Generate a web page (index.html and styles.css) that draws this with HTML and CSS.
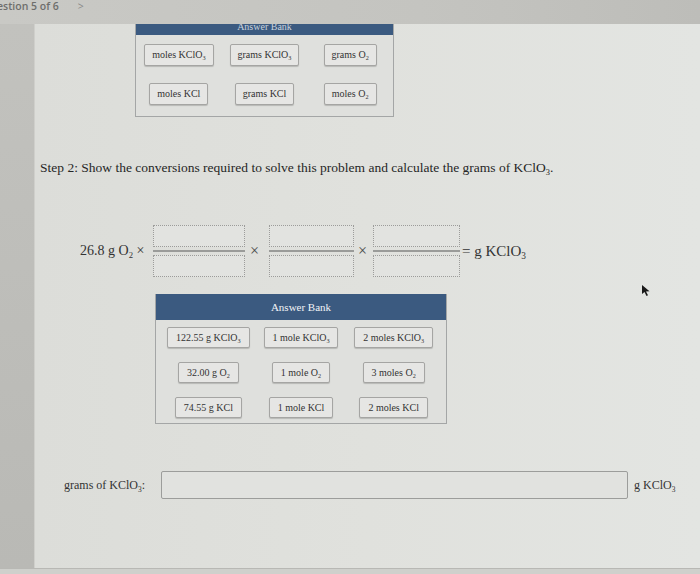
FILE: index.html
```html
<!DOCTYPE html>
<html>
<head>
<meta charset="utf-8">
<link rel="stylesheet" href="styles.css">
</head>
<body>
<div class="topbar"><span class="qnum">estion 5 of 6</span><span class="chev">&gt;</span></div>
<div class="main">
  <div class="leftstrip"></div>
  <div class="panel">
    <div class="bank bank1">
      <div class="bank-head small">Answer Bank</div>
      <div class="bank-body">
        <div class="chip">moles KClO<sub>3</sub></div>
        <div class="chip">grams KClO<sub>3</sub></div>
        <div class="chip">grams O<sub>2</sub></div>
        <div class="chip">moles KCl</div>
        <div class="chip">grams KCl</div>
        <div class="chip">moles O<sub>2</sub></div>
      </div>
    </div>

    <p class="step">Step 2: Show the conversions required to solve this problem and calculate the grams of KClO<sub>3</sub>.</p>

    <div class="equation">
      <span class="given">26.8 g O<sub>2</sub> &times;</span>
      <div class="frac"><div class="slot"></div><div class="bar"></div><div class="slot"></div></div>
      <span class="times">&times;</span>
      <div class="frac f2"><div class="slot"></div><div class="bar"></div><div class="slot"></div></div>
      <span class="times t2">&times;</span>
      <div class="frac f3"><div class="slot"></div><div class="bar"></div><div class="slot"></div></div>
      <span class="result">= g KClO<sub>3</sub></span>
    </div>

    <div class="bank bank2">
      <div class="bank-head">Answer Bank</div>
      <div class="bank-body">
        <div class="chip">122.55 g KClO<sub>3</sub></div>
        <div class="chip">1 mole KClO<sub>3</sub></div>
        <div class="chip">2 moles KClO<sub>3</sub></div>
        <div class="chip">32.00 g O<sub>2</sub></div>
        <div class="chip">1 mole O<sub>2</sub></div>
        <div class="chip">3 moles O<sub>2</sub></div>
        <div class="chip">74.55 g KCl</div>
        <div class="chip">1 mole KCl</div>
        <div class="chip">2 moles KCl</div>
      </div>
    </div>

    <div class="answer-row">
      <span class="label">grams of KClO<sub>3</sub>:</span>
      <div class="input"></div>
      <span class="unit">g KClO<sub>3</sub></span>
    </div>

    <svg class="cursor" width="10" height="13" viewBox="0 0 10 13"><path d="M1 1 L1 10 L3.5 8 L5.5 12 L7 11.3 L5 7.4 L8.5 7.2 Z" fill="#1a1a1a"/></svg>
  </div>
</div>
<div class="bottomstrip"></div>
</body>
</html>
```

FILE: styles.css
```css
html, body {
  margin: 0;
  padding: 0;
}
body {
  width: 700px;
  height: 574px;
  overflow: hidden;
  background: #c7c7c3;
  font-family: "Liberation Serif", "Times New Roman", serif;
  color: #2a2a2a;
}
sub {
  font-size: 0.62em;
  vertical-align: -0.35em;
  line-height: 0;
}
.topbar {
  height: 24px;
  display: flex;
  align-items: flex-start;
  font-family: "Open Sans", "Liberation Sans", sans-serif;
  font-size: 10.5px;
  font-weight: 600;
  color: #6e6e6c;
  background: linear-gradient(to right, #c9c9c5, #c4c4c0 60%, #bdbdb9);
}
.qnum {
  margin-left: -3px;
  line-height: 12px;
}
.chev {
  margin-left: 19px;
  line-height: 12px;
  font-weight: 400;
  color: #8a8a88;
}
.main {
  display: flex;
  height: 544px;
}
.leftstrip {
  width: 34px;
  background: linear-gradient(to bottom, #c2c2be, #b9b9b5);
}
.panel {
  position: relative;
  flex: 1;
  background: linear-gradient(to right, #dcddd9, #e0e1dd 50%, #e3e5e2);
  border-left: 1px solid #cfcfcb;
}
.bottomstrip {
  height: 6px;
  background: #cfd0cc;
  border-top: 1px solid #b8b8b4;
}
.bank {
  border: 1px solid #a4a6a6;
  border-top: none;
  background: #dfe0dd;
}
.bank-head {
  background: #3b5a80;
  color: #f2f4f6;
  font-size: 11px;
  text-align: center;
  height: 26px;
  line-height: 26px;
}
.bank-head.small {
  height: 11px;
  line-height: 6px;
  overflow: hidden;
  font-size: 10px;
  color: #c9d2de;
}
.bank-body {
  display: grid;
  grid-template-columns: repeat(3, 1fr);
  justify-items: center;
}
.chip {
  height: 19px;
  line-height: 19px;
  padding: 0 8px;
  font-size: 10px;
  color: #333;
  background: #e6e6e4;
  border: 1px solid #a5a5a3;
  border-radius: 2px;
  box-shadow: 0 1px 1px rgba(0, 0, 0, 0.18);
  white-space: nowrap;
}
.bank1 {
  margin-left: 100px;
  width: 257px;
}
.bank1 .bank-body {
  padding: 9px 0 11px;
  row-gap: 17px;
}
.bank1 .chip {
  height: 20px;
  line-height: 20px;
  padding: 0 7px;
}
.step {
  margin: 42px 0 0 5px;
  font-size: 13.5px;
  line-height: 18px;
  color: #262626;
}
.equation {
  display: flex;
  align-items: center;
  margin: 48px 0 0 45px;
  font-size: 14px;
  color: #333;
}
.given {
  width: 73px;
  white-space: nowrap;
}
.frac {
  width: 92px;
  display: flex;
  flex-direction: column;
}
.f2 { width: 85px; }
.f3 { width: 87px; }
.slot {
  height: 20px;
  border: 1px dotted #9c9c9a;
  background: #e2e3e0;
}
.bar {
  height: 2px;
  background: #9a9b99;
  margin: 3px 0;
}
.times {
  margin: 0 10px 0 5px;
  font-size: 16px;
  color: #4a4a4a;
}
.times.t2 {
  margin: 0 6px 0 4px;
}
.result {
  margin-left: 2px;
  font-size: 15px;
}
.bank2 {
  margin: 17px 0 0 120px;
  width: 290px;
}
.bank2 .bank-body {
  padding: 7px 6px 5px;
  row-gap: 14px;
}
.answer-row {
  display: flex;
  align-items: center;
  margin: 47px 0 0 29px;
  font-size: 12px;
  color: #333;
}
.label {
  width: 97px;
  white-space: nowrap;
}
.input {
  width: 465px;
  height: 26px;
  border: 1.5px solid #9c9d9b;
  border-radius: 2px;
  background: #e1e2df;
}
.unit {
  margin-left: 6px;
  white-space: nowrap;
}
.cursor {
  position: absolute;
  left: 606px;
  top: 260px;
}
```
